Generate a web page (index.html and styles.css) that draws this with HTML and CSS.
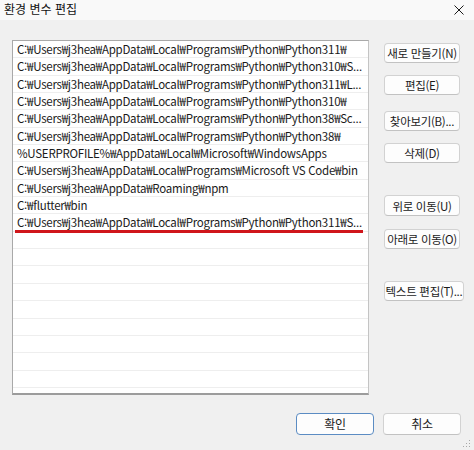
FILE: index.html
```html
<!DOCTYPE html>
<html lang="ko">
<head>
<meta charset="utf-8">
<title>환경 변수 편집</title>
<link rel="stylesheet" href="styles.css">
</head>
<body>
<div class="dialog">
  <div class="titlebar">
    <span class="title">환경 변수 편집</span>
    <svg class="close" width="10" height="10" viewBox="0 0 10 10"><path d="M0.5 0.5 L9.5 9.5 M9.5 0.5 L0.5 9.5" stroke="#1a1a1a" stroke-width="1" fill="none"/></svg>
  </div>
  <div class="main">
    <div class="list">
      <div class="row">C:₩Users₩j3hea₩AppData₩Local₩Programs₩Python₩Python311₩</div>
      <div class="row">C:₩Users₩j3hea₩AppData₩Local₩Programs₩Python₩Python310₩S...</div>
      <div class="row">C:₩Users₩j3hea₩AppData₩Local₩Programs₩Python₩Python311₩L...</div>
      <div class="row">C:₩Users₩j3hea₩AppData₩Local₩Programs₩Python₩Python310₩</div>
      <div class="row">C:₩Users₩j3hea₩AppData₩Local₩Programs₩Python₩Python38₩Sc...</div>
      <div class="row">C:₩Users₩j3hea₩AppData₩Local₩Programs₩Python₩Python38₩</div>
      <div class="row">%USERPROFILE%₩AppData₩Local₩Microsoft₩WindowsApps</div>
      <div class="row">C:₩Users₩j3hea₩AppData₩Local₩Programs₩Microsoft VS Code₩bin</div>
      <div class="row">C:₩Users₩j3hea₩AppData₩Roaming₩npm</div>
      <div class="row">C:₩flutter₩bin</div>
      <div class="row marked">C:₩Users₩j3hea₩AppData₩Local₩Programs₩Python₩Python311₩S...</div>
      <div class="row"></div>
      <div class="row"></div>
      <div class="row"></div>
      <div class="row"></div>
      <div class="row"></div>
      <div class="row"></div>
      <div class="row"></div>
      <div class="row"></div>
      <div class="row"></div>
      <div class="row"></div>
    </div>
    <div class="side">
      <button class="btn b-new">새로 만들기(N)</button>
      <button class="btn b-edit">편집(E)</button>
      <button class="btn b-browse">찾아보기(B)...</button>
      <button class="btn b-del">삭제(D)</button>
      <button class="btn b-up">위로 이동(U)</button>
      <button class="btn b-down">아래로 이동(O)</button>
      <button class="btn b-text">텍스트 편집(T)...</button>
    </div>
  </div>
  <div class="footer">
    <button class="btn ok">확인</button>
    <button class="btn cancel">취소</button>
  </div>
  <svg class="grip" width="8" height="8" viewBox="0 0 8 8">
    <rect x="6" y="0" width="1" height="1" fill="#a8a8a8"/>
    <rect x="6" y="3" width="1" height="1" fill="#a8a8a8"/>
    <rect x="3" y="3" width="1" height="1" fill="#a8a8a8"/>
    <rect x="6" y="6" width="1" height="1" fill="#a8a8a8"/>
    <rect x="3" y="6" width="1" height="1" fill="#a8a8a8"/>
    <rect x="0" y="6" width="1" height="1" fill="#a8a8a8"/>
  </svg>
</div>
</body>
</html>
```

FILE: styles.css
```css
* { box-sizing: border-box; }
html, body {
  margin: 0;
  padding: 0;
}
body {
  width: 474px;
  height: 450px;
  overflow: hidden;
  background: #f0f0f0;
  font-family: "Noto Sans CJK KR", "Noto Sans", sans-serif;
  color: #1a1a1a;
}
.dialog {
  position: relative;
  width: 474px;
  height: 450px;
  background: #f0f0f0;
}
.titlebar {
  height: 20px;
  background: #f9f9f9;
  display: flex;
  align-items: center;
  justify-content: space-between;
  padding: 0 10px 0 4px;
}
.title {
  font-size: 12px;
  line-height: 20px;
  color: #111;
  margin-top: -2px;
}
.close {
  display: block;
}
.main {
  display: flex;
  padding: 20px 0 0 12px;
}
.list {
  width: 357px;
  height: 355px;
  background: #ffffff;
  border: 1px solid #a9a9a9;
  border-right-color: #c4c4c4;
  border-bottom: 2px solid #9c9c9c;
  overflow: hidden;
}
.row {
  position: relative;
  height: 17.35px;
  border-bottom: 1px solid #eeeeee;
  padding-left: 4px;
  font-size: 11.5px;
  letter-spacing: -0.25px;
  line-height: 16px;
  white-space: nowrap;
  color: #1a1a1a;
}
.row.marked::after {
  content: "";
  position: absolute;
  left: 2px;
  right: 5px;
  bottom: -2px;
  height: 3px;
  background: #d0161b;
}
.side {
  display: flex;
  flex-direction: column;
  align-items: flex-start;
  margin-left: 15px;
  padding-top: 3px;
}
.btn {
  height: 20px;
  width: 76px;
  padding: 0;
  background: #fdfdfd;
  border: 1px solid #d2d2d2;
  border-bottom-color: #c2c2c2;
  border-radius: 4px;
  font-family: "Noto Sans CJK KR", "Noto Sans", sans-serif;
  font-size: 11.5px;
  letter-spacing: -0.3px;
  line-height: 18px;
  color: #1a1a1a;
  white-space: nowrap;
  text-align: center;
  overflow: visible;
}
.b-edit { margin-top: 12px; }
.b-browse { margin-top: 16px; }
.b-del { margin-top: 12px; }
.b-up { margin-top: 32px; height: 21px; }
.b-down { margin-top: 13px; }
.b-text { margin-top: 32px; width: 80px; }
.footer {
  display: flex;
  justify-content: flex-end;
  gap: 9px;
  padding: 18px 13px 0 0;
}
.footer .btn {
  width: 78px;
  height: 22px;
  font-size: 12px;
}
.footer .ok {
  border: 1.5px solid #5b8cc3;
}
.grip {
  position: absolute;
  right: 3px;
  bottom: 2px;
}
```
